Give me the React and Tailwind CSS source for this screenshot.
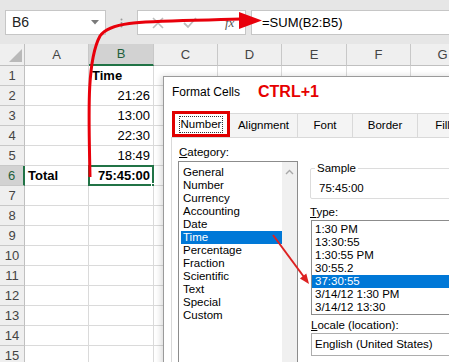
import React from "react";

const COLS = [
  ["A", "w-[64px]"],
  ["B", "w-[65px]"],
  ["C", "w-[64px]"],
  ["D", "w-[64px]"],
  ["E", "w-[65px]"],
  ["F", "w-[64px]"],
  ["G", "w-[64px]"],
];

const SHEET = {
  1: { B: { v: "Time", bold: true } },
  2: { B: { v: "21:26", right: true } },
  3: { B: { v: "13:00", right: true } },
  4: { B: { v: "22:30", right: true } },
  5: { B: { v: "18:49", right: true } },
  6: { A: { v: "Total", bold: true }, B: { v: "75:45:00", bold: true, right: true, selected: true } },
};

const CATEGORIES = ["General", "Number", "Currency", "Accounting", "Date", "Time", "Percentage", "Fraction", "Scientific", "Text", "Special", "Custom"];
const TYPES = ["1:30 PM", "13:30:55", "1:30:55 PM", "30:55.2", "37:30:55", "3/14/12 1:30 PM", "3/14/12 13:30"];
const TABS = [
  ["Number", "w-[58px]"],
  ["Alignment", "w-[68px]"],
  ["Font", "w-[55px]"],
  ["Border", "w-[65px]"],
  ["Fill", "w-[50px]"],
];

const FormulaBar = () => (
  <div className="h-[44px] bg-[#e6e6e6] flex items-start pt-[10px] pl-[5px]">
    <div className="w-[101px] h-[25px] bg-white border border-[#c6c6c6] flex items-center pl-[6px] pr-[6px] justify-between">
      <span className="text-[14px] text-[#222]">B6</span>
      <svg width="8" height="5" viewBox="0 0 8 5">
        <path d="M0 0 L8 0 L4 4.5 Z" fill="#7a7a7a" />
      </svg>
    </div>
    <div className="w-[31px] h-[25px] flex items-center justify-center">
      <svg width="3" height="10" viewBox="0 0 3 10">
        <circle cx="1.5" cy="1.5" r="1" fill="#9a9a9a" />
        <circle cx="1.5" cy="5" r="1" fill="#9a9a9a" />
        <circle cx="1.5" cy="8.5" r="1" fill="#9a9a9a" />
      </svg>
    </div>
    <div className="w-[109px] h-[25px] bg-white border border-[#c6c6c6] flex items-center pl-[14px] gap-[19px]">
      <svg width="12" height="12" viewBox="0 0 12 12">
        <path d="M1 1 L11 11 M11 1 L1 11" stroke="#bdbdbd" strokeWidth="1.6" />
      </svg>
      <svg width="14" height="12" viewBox="0 0 14 12">
        <path d="M1 6 L5 10 L13 1" stroke="#bdbdbd" strokeWidth="1.8" fill="none" />
      </svg>
      <span className="ml-[9px] text-[13px] italic text-[#555] font-['Liberation_Serif',serif]">fx</span>
    </div>
    <div className="ml-[5px] flex-1 h-[25px] bg-white border border-r-0 border-[#c6c6c6] flex items-center pl-[10px]">
      <span className="text-[13px] text-black">=SUM(B2:B5)</span>
    </div>
  </div>
);

const Grid = () => (
  <div className="flex flex-col">
    <div className="flex h-[22px]">
      <div className="w-[25px] shrink-0 bg-[#efefef] border-r border-b border-[#c0c0c0] relative">
        <svg className="absolute right-[2px] bottom-[3px]" width="13" height="13" viewBox="0 0 13 13">
          <path d="M13 0 L13 13 L0 13 Z" fill="#b9b9b9" />
        </svg>
      </div>
      {COLS.map(([c, w]) => (
        <div
          key={c}
          className={`${w} shrink-0 flex items-center justify-center text-[13px] border-r border-[#c8c8c8] ${
            c === "B" ? "bg-[#d2d2d2] text-[#1f5f3b] border-b-2 border-b-[#217346]" : "bg-[#efefef] text-[#444] border-b border-b-[#c0c0c0]"
          }`}
        >
          {c}
        </div>
      ))}
    </div>
    {Array.from({ length: 15 }, (_, i) => i + 1).map((r) => (
      <div key={r} className="flex h-[20px]">
        <div
          className={`w-[25px] shrink-0 flex items-center justify-center text-[13px] border-b border-[#c8c8c8] ${
            r === 6 ? "bg-[#d2d2d2] text-[#1f5f3b] border-r-2 border-r-[#217346]" : "bg-[#efefef] text-[#444] border-r border-r-[#c0c0c0]"
          }`}
        >
          {r}
        </div>
        {COLS.map(([c, w]) => {
          const cell = SHEET[r] && SHEET[r][c];
          return (
            <div
              key={c}
              className={`${w} shrink-0 relative bg-white border-r border-b border-[#dadada] px-[3px] flex items-center text-[13px] text-black ${
                cell && cell.right ? "justify-end" : "justify-start"
              } ${cell && cell.bold ? "font-bold" : ""}`}
            >
              {cell ? cell.v : null}
              {cell && cell.selected ? (
                <>
                  <div className="absolute left-[-1px] top-[-1px] right-[-1px] bottom-[-1px] border-2 border-[#217346]" />
                  <div className="absolute right-[-4px] bottom-[-4px] w-[6px] h-[6px] bg-[#217346] border border-white" />
                </>
              ) : null}
            </div>
          );
        })}
      </div>
    ))}
  </div>
);

const Dialog = () => (
  <div className="absolute left-[163px] top-[76px] w-[300px] h-[300px] bg-white border border-[#9a9a9a] shadow-[-2px_0_6px_rgba(0,0,0,0.15)] font-['Liberation_Sans',sans-serif] text-[11.5px] text-black">
    <div className="h-[33px] flex items-center pl-[8px] pb-[3px] gap-[18px]">
      <span className="text-[12px]">Format Cells</span>
      <span className="text-[16px] font-bold text-[#e60000]">CTRL+1</span>
    </div>
    <div className="h-[27px] flex items-end pl-[8px]">
      {TABS.map(([t, w]) =>
        t === "Number" ? (
          <div key={t} className={`${w} shrink-0 h-[26px] border-[3px] border-[#e00000] bg-white flex items-center justify-center`}>
            <span className="border border-dotted border-[#333] px-[1px] leading-[15px]">{t}</span>
          </div>
        ) : (
          <div key={t} className={`${w} shrink-0 h-[24px] border-t border-r border-[#d9d9d9] bg-[#f4f4f4] flex items-center justify-center`}>
            {t}
          </div>
        )
      )}
    </div>
    <div className="ml-[7px] h-[240px] border-t border-l border-[#d9d9d9] flex pl-[6px] gap-[12px]">
      <div className="w-[120px] shrink-0 flex flex-col">
        <div className="mt-[7px] h-[14px] leading-[14px] pl-[1px]">
          <span className="underline">C</span>ategory:
        </div>
        <div className="mt-[2px] h-[220px] border border-[#8c8c8c] flex">
          <div className="flex-1 pt-[4px] pl-[2px]">
            {CATEGORIES.map((c) => (
              <div key={c} className={`h-[13px] leading-[13px] pl-[2px] ${c === "Time" ? "bg-[#0078d7] text-white" : ""}`}>
                {c}
              </div>
            ))}
          </div>
          <div className="w-[15px] bg-[#f0f0f0] flex justify-center pt-[7px]">
            <svg width="9" height="6" viewBox="0 0 9 6">
              <path d="M1 5 L4.5 1.5 L8 5" stroke="#a8a8a8" strokeWidth="1.4" fill="none" />
            </svg>
          </div>
        </div>
      </div>
      <div className="w-[200px] shrink-0 flex flex-col">
        <div className="mt-[30px] relative h-[31px] border border-[#dcdcdc] rounded-[2px] pl-[8px] pt-[12px] leading-[14px]">
          <span className="absolute left-[4px] top-[-8px] bg-white px-[2px] leading-[14px]">Sample</span>
          75:45:00
        </div>
        <div className="mt-[6px] h-[14px] leading-[14px]">
          <span className="underline">T</span>ype:
        </div>
        <div className="mt-[1px] ml-[1px] h-[95px] border border-r-0 border-[#8c8c8c] pt-[2px]">
          {TYPES.map((t) => (
            <div key={t} className={`h-[13px] leading-[13px] pl-[3px] ${t === "37:30:55" ? "bg-[#0078d7] text-white" : ""}`}>
              {t}
            </div>
          ))}
        </div>
        <div className="mt-[3px] ml-[1px] h-[14px] leading-[14px]">
          <span className="underline">L</span>ocale (location):
        </div>
        <div className="mt-[1px] ml-[1px] h-[23px] border border-r-0 border-[#adadad] flex items-center pl-[3px]">
          English (United States)
        </div>
      </div>
    </div>
  </div>
);

const Arrows = () => (
  <svg className="absolute left-0 top-0 pointer-events-none" width="449" height="362" viewBox="0 0 449 362">
    <path d="M90 177 C89 120 86 62 100 36 C112 19 150 22 241 19" stroke="#e8000b" strokeWidth="3" fill="none" />
    <polygon points="239,12 262,20.5 239,29" fill="#e8000b" />
    <line x1="273" y1="235" x2="304" y2="277" stroke="#dd2222" strokeWidth="2" />
    <polygon points="309,284 306.3,273.6 299.9,278.4" fill="#dd2222" />
  </svg>
);

export default function App() {
  return (
    <div className="relative w-[449px] h-[362px] overflow-hidden bg-white font-['Liberation_Sans',sans-serif]">
      <FormulaBar />
      <Grid />
      <Dialog />
      <Arrows />
    </div>
  );
}
